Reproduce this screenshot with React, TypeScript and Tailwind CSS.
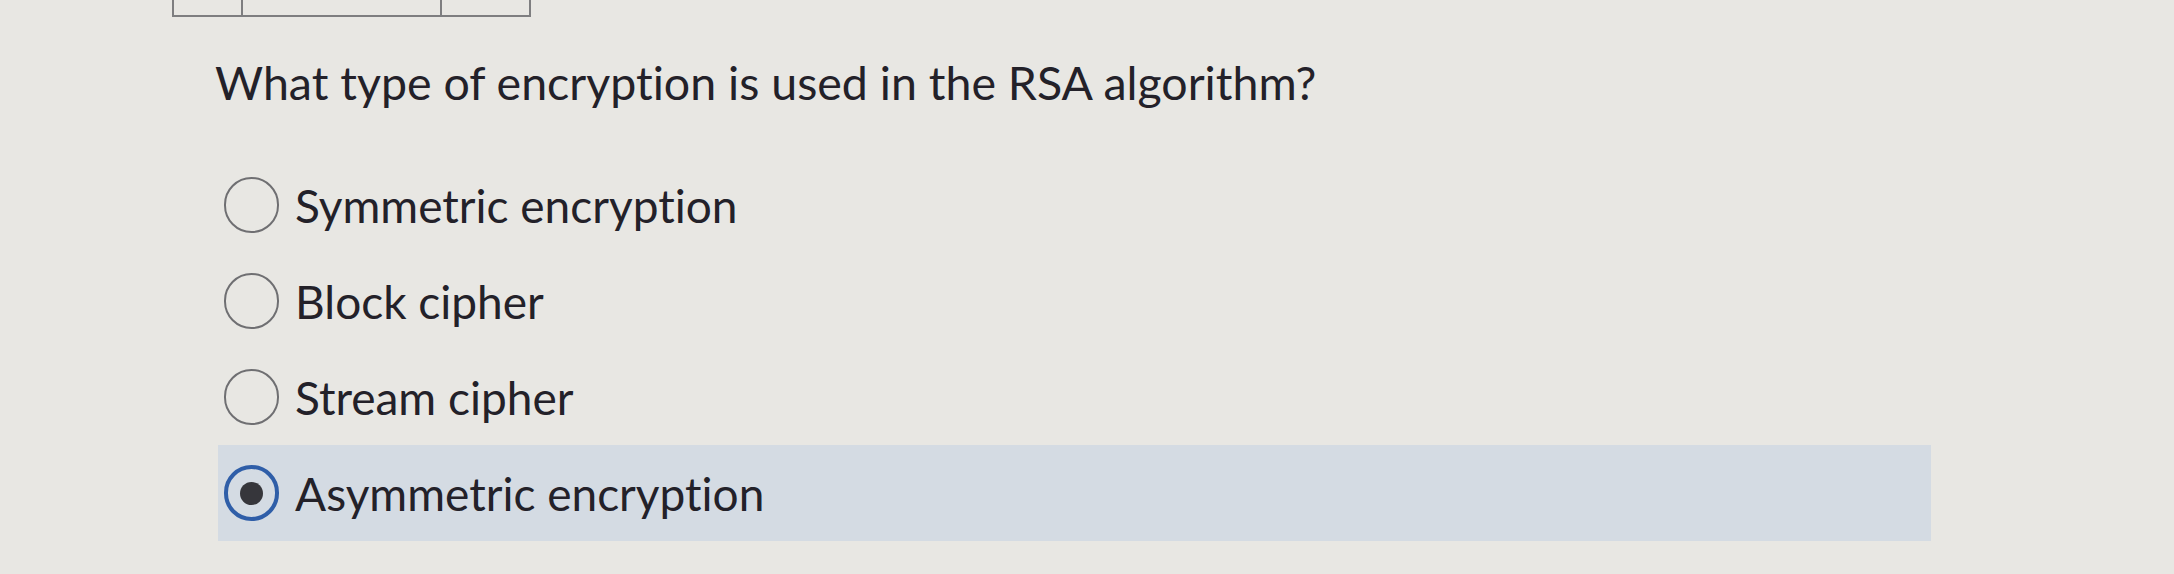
const OPTIONS = ['Symmetric encryption', 'Block cipher', 'Stream cipher', 'Asymmetric encryption']
const SELECTED = 3

function Radio({ checked }: { checked: boolean }) {
  if (checked) {
    return (
      <span className="flex h-[56px] w-[55px] shrink-0 items-center justify-center rounded-full border-[4px] border-[#2f5ea8]">
        <span className="h-[23px] w-[23px] rounded-full bg-[#36363b]" />
      </span>
    )
  }
  return <span className="h-[56px] w-[55px] shrink-0 rounded-full border-2 border-[#6f6f72]" />
}

export default function App() {
  return (
    <div className="h-[574px] w-full overflow-hidden bg-[#e8e7e3] font-['Lato','Noto_Sans',sans-serif] text-[#232129] [font-variant-ligatures:none]">
      {/* table stub cut off at the top */}
      <div className="ml-[172px] flex h-[17px] w-[359px] border-x-2 border-b-2 border-[#7e7e80]">
        <div className="w-[69px] border-r-2 border-[#7e7e80]" />
        <div className="w-[199px] border-r-2 border-[#7e7e80]" />
        <div className="flex-1" />
      </div>

      <h1 className="ml-[215px] mt-[37px] text-[46.5px] leading-[56px]">
        What type of encryption is used in the RSA algorithm?
      </h1>

      <div className="ml-[218px] mt-[47px] flex w-[1713px] flex-col">
        {OPTIONS.map((label, i) => (
          <label
            key={label}
            className={`flex h-[96px] items-center gap-[16px] pl-[6px] text-[46px] ${i === SELECTED ? 'bg-[#d4dbe3]' : ''}`}
          >
            <Radio checked={i === SELECTED} />
            <span>{label}</span>
          </label>
        ))}
      </div>
    </div>
  )
}
